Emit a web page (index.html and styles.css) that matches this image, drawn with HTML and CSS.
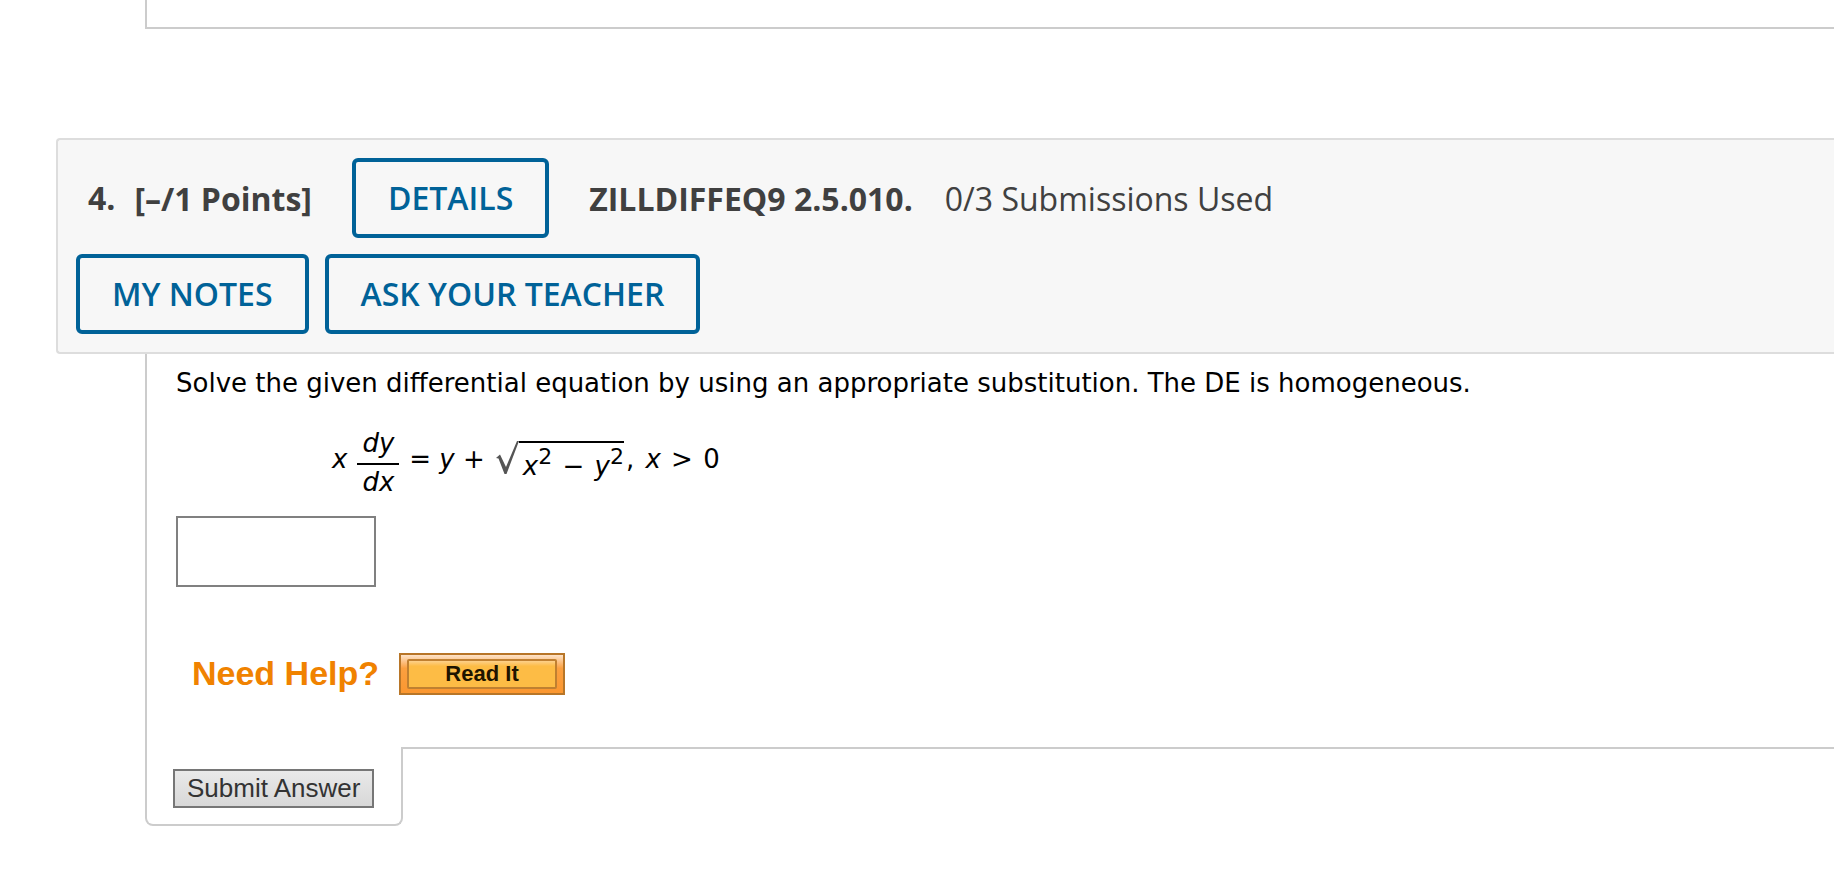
FILE: index.html
```html
<!DOCTYPE html>
<html lang="en">
<head>
    <meta charset="utf-8">
    <title>ZILLDIFFEQ9 2.5.010.</title>
    <link rel="stylesheet" href="styles.css">
</head>
<body>
    <div class="previous-question"></div>

    <section class="question">
        <header class="question-header">
            <div class="header-row">
                <span class="number">4.</span>
                <span class="points">[–/1 Points]</span>
                <button type="button" class="header-button">DETAILS</button>
                <span class="source">ZILLDIFFEQ9 2.5.010.</span>
                <span class="submissions">0/3 Submissions Used</span>
            </div>
            <div class="header-row actions">
                <button type="button" class="header-button">MY NOTES</button>
                <button type="button" class="header-button">ASK YOUR TEACHER</button>
            </div>
        </header>

        <form class="question-form">
            <div class="question-body">
                <label class="prompt" for="answer">Solve the given differential equation by using an appropriate substitution. The DE is homogeneous.</label>

                <div class="equation">
                    <span class="term"><i>x</i></span>
                    <span class="fraction">
                        <i class="numerator">dy</i>
                        <i class="denominator">dx</i>
                    </span>
                    <span class="term">= <i>y</i> +</span>
                    <span class="root">
                        <svg class="radical" viewBox="0 0 24 34" aria-hidden="true">
                            <path d="M1 17 L5 13.500 L11 26 L22 0 L24 0 L11.500 33 L9.500 33 L3.500 17.500 Z"/>
                        </svg>
                        <span class="radicand"><i>x</i><sup>2</sup> <span class="operator">−</span> <i>y</i><sup>2</sup></span>
                    </span>
                    <span class="term"><span class="comma">,</span> <i>x</i> <span class="operator">&gt;</span> 0</span>
                </div>

                <input type="text" id="answer" class="answer">

                <div class="help">
                    <span class="help-title">Need Help?</span>
                    <button type="button" class="read-button"><span>Read It</span></button>
                </div>
            </div>
            <div class="submit-tab">
                <button type="button" class="submit-button">Submit Answer</button>
            </div>
        </form>
    </section>
</body>
</html>
```
FILE: styles.css
```css
* {
    box-sizing: border-box;
}

body {
    margin: 0;
    background: #fff;
    color: #000;
    font-family: Verdana, "DejaVu Sans", sans-serif;
    font-size: 26px;
    line-height: 30px;
}

button {
    margin: 0;
    cursor: pointer;
}

.previous-question {
    height: 29px;
    margin-left: 145px;
    border-left: 2px solid #ccc;
    border-bottom: 2px solid #ccc;
}

.question {
    margin-top: 109px;
}

/* header bar */
.question-header {
    display: flex;
    flex-direction: column;
    gap: 16px;
    margin-left: 56px;
    padding: 18px;
    background: #f7f7f7;
    border: 2px solid #ddd;
    border-right: none;
    border-radius: 4px 0 0 4px;
    color: #404040;
    font-family: "Open Sans", sans-serif;
    font-size: 32px;
    line-height: 44px;
}

.header-row {
    display: flex;
    align-items: center;
}

.actions {
    gap: 16px;
}

.number,
.points,
.source {
    font-weight: 700;
}

.number {
    padding: 0 19px 0 12px;
}

.points {
    padding-right: 40px;
}

.source {
    padding: 0 32px 0 40px;
}

.points,
.source,
.submissions {
    padding-top: 2px;
}

.submissions {
    font-weight: 400;
}

.header-button {
    padding: 14px 32px;
    background: transparent;
    border: 4px solid #006298;
    border-radius: 6px;
    color: #006298;
    font-family: "Open Sans", sans-serif;
    font-size: 32px;
    font-weight: 600;
    line-height: 44px;
}

/* question body */
.question-form {
    margin-left: 145px;
}

.question-body {
    padding: 14px 29px 52px;
    border-left: 2px solid #ccc;
    border-bottom: 2px solid #ccc;
}

.prompt {
    display: block;
}

.equation {
    display: flex;
    align-items: center;
    gap: 10px;
    margin: 26px 0 19px 156px;
}

.term {
    padding-bottom: 4px;
}

.operator {
    padding: 0 2px;
}

.comma {
    padding-right: 3px;
}

.fraction {
    display: flex;
    flex-direction: column;
    padding-top: 4px;
    text-align: center;
}

.numerator {
    padding: 0 5px 5px;
    border-bottom: 2px solid #000;
}

.denominator {
    padding: 2px 5px 0;
}

.root {
    display: flex;
    margin-right: -8px;
}

.radical {
    width: 24px;
    height: 34px;
    fill: #555;
}

.radicand {
    padding: 8px 0 0 4px;
    border-top: 2px solid #000;
}

sup {
    font-size: 22px;
    line-height: 0;
    vertical-align: 11px;
}

.answer {
    display: block;
    width: 200px;
    height: 71px;
    padding: 4px 8px;
    border: 2px solid #808080;
    font: inherit;
}

.help {
    display: flex;
    align-items: center;
    gap: 20px;
    margin-top: 66px;
    padding-left: 16px;
    font-family: Arial, "Liberation Sans", sans-serif;
}

.help-title {
    padding-bottom: 2px;
    color: #f08200;
    font-size: 34px;
    font-weight: 700;
    line-height: 38px;
}

.read-button {
    width: 166px;
    height: 42px;
    padding: 4px 6px;
    background: linear-gradient(#fee3c8, #fba040 35%, #fb9730);
    border: 2px solid #b87628;
    font-family: Arial, "Liberation Sans", sans-serif;
    font-size: 22px;
    font-weight: 700;
    line-height: 26px;
}

.read-button span {
    display: block;
    background: linear-gradient(#fdd08a, #fdbc45 20%);
    border: 2px solid #c08030;
    border-radius: 2px;
    color: #1e1400;
}

/* submit tab hangs below the body and hides its bottom line */
.submit-tab {
    position: relative;
    width: fit-content;
    margin-top: -2px;
    padding: 22px 27px 16px 26px;
    background: #fff;
    border: 2px solid #ccc;
    border-top: none;
    border-radius: 0 0 8px 8px;
}

.submit-button {
    display: block;
    padding: 2px 12px 3px;
    background: linear-gradient(#e9e9e9, #d8d8d8);
    border: 2px solid #767676;
    color: #333;
    font-family: Arial, "Liberation Sans", sans-serif;
    font-size: 26px;
    line-height: 30px;
}
```
